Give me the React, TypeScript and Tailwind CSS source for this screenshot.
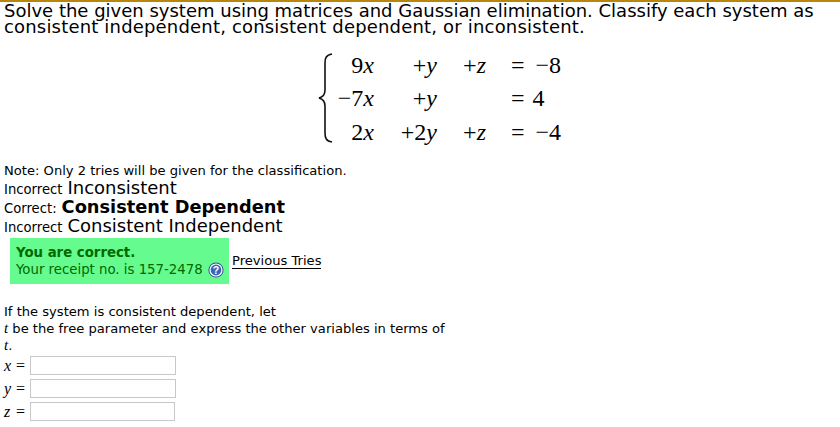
import React from 'react';

const serif = "font-['Liberation_Serif',serif]";

const rows = [
  { a: '9', b: '+', c: true, r: '−8', neg: true },
  { a: '−7', b: '+', c: false, r: '4', neg: false },
  { a: '2', b: '+2', c: true, r: '−4', neg: true },
];

const Answer = ({ label, text, bold }: { label: string; text: string; bold?: boolean }) => (
  <div className="h-[19px] leading-[19px] flex items-baseline whitespace-nowrap">
    <span className="text-[13.2px] mr-[5px]">{label}</span>
    <span className={bold ? 'text-[17.8px] font-bold' : 'text-[18px]'}>{text}</span>
  </div>
);

const VarInput = ({ name, width }: { name: string; width: string }) => (
  <div className="flex items-center h-[23px]">
    <span className={`${serif} italic text-[16px] w-[12px] leading-none`}>{name}</span>
    <span className={`${serif} text-[16px] w-[14px] leading-none`}>=</span>
    <div className={`h-[19px] ${width} border border-[#c8c8c8] bg-white`} />
  </div>
);

const HelpIcon = () => (
  <svg width="16" height="16" viewBox="0 0 16 16" className="ml-[5px] shrink-0">
    <circle cx="8" cy="8" r="7.6" fill="#2c4f96" />
    <circle cx="8" cy="8" r="6.6" fill="#ffffff" />
    <circle cx="8" cy="8" r="5.4" fill="#3a66b8" />
    <text x="8" y="11.6" textAnchor="middle" fontSize="10.5" fontWeight="700" fill="#ffffff" fontFamily="Liberation Sans, sans-serif">?</text>
  </svg>
);

export default function App() {
  return (
    <div className="w-[840px] h-[427px] overflow-hidden bg-white text-black font-['DejaVu_Sans',sans-serif] border-t-2 border-[#b8860b]">
      <div className="pl-[4px] pt-[1px] text-[18px] leading-[16px] whitespace-nowrap">
        Solve the given system using matrices and Gaussian elimination. Classify each system as
        <br />
        <span className="tracking-[0.18px]">consistent independent, consistent dependent, or inconsistent.</span>
      </div>

      <div className="flex mt-[14px] pl-[318px] h-[100px]">
        <svg width="16" height="90" viewBox="0 0 16 90" className="mt-[4px] shrink-0">
          <path d="M14 1 C8 2 7 5 7 10 L7 37 C7 42 5 44 1 45 C5 46 7 48 7 53 L7 80 C7 85 8 88 14 89" fill="none" stroke="#111" strokeWidth="1.6" />
        </svg>
        <div className={`${serif} text-[24px] leading-[33px] grid grid-cols-[41px_63px_49px_80px] ml-[-1px]`}>
          {rows.map((row, i) => (
            <React.Fragment key={i}>
              <div className="text-right">{row.a}<i>x</i></div>
              <div className="text-right">{row.b}<i>y</i></div>
              <div className="text-right">{row.c && <>+<i>z</i></>}</div>
              <div className="pl-[25px] whitespace-nowrap flex">
                <span className={row.neg ? 'mr-[11px]' : 'mr-[8px]'}>=</span>
                {row.r}
              </div>
            </React.Fragment>
          ))}
        </div>
      </div>

      <div className="pl-[4px]">
        <div className="text-[13.1px] leading-[15px] mt-[14px]">Note: Only 2 tries will be given for the classification.</div>
        <Answer label="Incorrect" text="Inconsistent" />
        <Answer label="Correct:" text="Consistent Dependent" bold />
        <Answer label="Incorrect" text="Consistent Independent" />

        <div className="flex items-start pl-[6px] mt-[3px]">
          <div className="w-[219px] h-[46px] bg-[#66fb8e] pl-[6px] pt-[6px] text-[13.3px] leading-[17px] text-[#006a00]">
            <div className="font-bold">You are correct.</div>
            <div className="flex items-center whitespace-nowrap">
              Your receipt no. is 157-2478
              <HelpIcon />
            </div>
          </div>
          <span className="ml-[3px] mt-[15px] text-[13.1px] leading-[15px] border-b border-black">Previous Tries</span>
        </div>

        <div className="text-[13.1px] leading-[17px] mt-[19px]">
          If the system is consistent dependent, let
          <br />
          <i className={`${serif} text-[15px]`}>t</i> be the free parameter and express the other variables in terms of
          <br />
          <i className={`${serif} text-[15px]`}>t</i>.
        </div>
        <div>
          <VarInput name="x" width="w-[146px]" />
          <VarInput name="y" width="w-[146px]" />
          <VarInput name="z" width="w-[145px]" />
        </div>
      </div>
    </div>
  );
}
